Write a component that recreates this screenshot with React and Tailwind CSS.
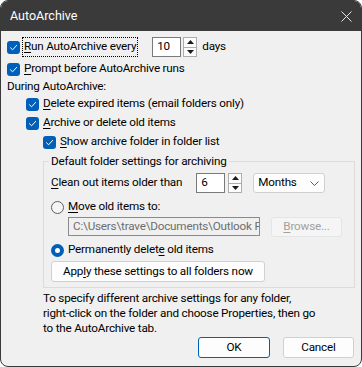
import React from "react";

function Check() {
  return (
    <span className="w-[13px] h-[13px] shrink-0 rounded-[3px] bg-[#005fb8] flex items-center justify-center">
      <svg width="9" height="9" viewBox="0 0 9 9" fill="none">
        <path d="M1.5 4.8 L3.6 6.8 L7.6 2.4" stroke="#fff" strokeWidth="1" strokeLinecap="round" strokeLinejoin="round" />
      </svg>
    </span>
  );
}

function Radio({ on }) {
  if (on) {
    return (
      <span className="w-[13px] h-[13px] shrink-0 rounded-full bg-[#005fb8] flex items-center justify-center">
        <span className="w-[5px] h-[5px] rounded-full bg-white" />
      </span>
    );
  }
  return <span className="w-[13px] h-[13px] shrink-0 rounded-full border border-[#5f5f5f] bg-[#f5f5f5]" />;
}

function U({ children }) {
  return <span className="underline underline-offset-[2px] decoration-[1px]">{children}</span>;
}

function Spin() {
  return (
    <div className="w-[14px] h-[20px] border border-[#adadad] bg-[#fdfdfd] flex flex-col">
      <div className="flex-1 flex items-center justify-center border-b border-[#adadad]">
        <svg width="7" height="4" viewBox="0 0 7 4"><path d="M0 4 L3.5 0 L7 4 Z" fill="#1a1a1a" /></svg>
      </div>
      <div className="flex-1 flex items-center justify-center">
        <svg width="7" height="4" viewBox="0 0 7 4"><path d="M0 0 L3.5 4 L7 0 Z" fill="#1a1a1a" /></svg>
      </div>
    </div>
  );
}

export default function App() {
  return (
    <div className="w-[362px] h-[367px] bg-white font-['Roboto',sans-serif] text-[11.7px] tracking-[-0.2px] text-black leading-none">
      <div className="h-full rounded-[8px] border border-[#3a3a3a] bg-[#f0f0f0] overflow-hidden flex flex-col">
        <div className="h-[30px] shrink-0 bg-[#3a3a3a] flex items-center justify-between pl-[9px] pr-[9px]">
          <span className="text-white text-[12.5px] tracking-normal">AutoArchive</span>
          <svg width="11" height="11" viewBox="0 0 11 11">
            <path d="M0.5 0.5 L10.5 10.5 M10.5 0.5 L0.5 10.5" stroke="#e6e6e6" strokeWidth="1" />
          </svg>
        </div>

        <div className="flex flex-col pl-[6px] pr-[6px]">
          <div className="mt-[6px] h-[20px] flex items-center">
            <Check />
            <span className="ml-[2px] h-[20px] px-[1px] flex items-center border border-dotted border-black">
              <U>R</U>un AutoArchive every
            </span>
            <div className="ml-[14px] w-[29px] h-[20px] border border-[#7a7a7a] bg-white flex items-center pl-[4px]">10</div>
            <div className="ml-[2px]"><Spin /></div>
            <span className="ml-[5px]">days</span>
          </div>

          <div className="h-[24px] flex items-center">
            <Check />
            <span className="ml-[4px]"><U>P</U>rompt before AutoArchive runs</span>
          </div>

          <div className="h-[12px] flex items-center">During AutoArchive:</div>

          <div className="h-[22px] flex items-center pl-[19px]">
            <Check />
            <span className="ml-[4px]"><U>D</U>elete expired items (email folders only)</span>
          </div>

          <div className="h-[16px] flex items-center pl-[19px]">
            <Check />
            <span className="ml-[4px]"><U>A</U>rchive or delete old items</span>
          </div>

          <div className="h-[22px] flex items-center pl-[36px]">
            <Check />
            <span className="ml-[4px]"><U>S</U>how archive folder in folder list</span>
          </div>

          <fieldset className="ml-[36px] border border-[#dcdcdc] pl-[7px] pr-[9px] pb-[5px]">
            <legend className="ml-[-2px] px-[2px] h-[16px] leading-[16px]">Default folder settings for archiving</legend>

            <div className="mt-[4px] h-[20px] flex items-center">
              <span><U>C</U>lean out items older than</span>
              <div className="ml-[14px] w-[29px] h-[20px] border border-[#7a7a7a] bg-white flex items-center pl-[4px]">6</div>
              <div className="ml-[3px]"><Spin /></div>
              <div className="ml-[11px] w-[72px] h-[20px] rounded-[3px] border border-[#d0d0d0] bg-[#fdfdfd] flex items-center justify-between pl-[4px] pr-[5px]">
                <span>Months</span>
                <svg width="9" height="5" viewBox="0 0 9 5"><path d="M0.5 0.5 L4.5 4.5 L8.5 0.5" stroke="#5a5a5a" fill="none" strokeWidth="1" /></svg>
              </div>
            </div>

            <div className="mt-[4px] h-[20px] flex items-center">
              <Radio />
              <span className="ml-[4px]"><U>M</U>ove old items to:</span>
            </div>

            <div className="h-[19px] flex items-center pl-[17px]">
              <div className="w-[192px] h-[19px] border border-[#8a8a8a] bg-[#f0f0f0] text-[#6d6d6d] flex items-center pl-[4px] overflow-hidden whitespace-nowrap">
                C:\Users\trave\Documents\Outlook F
              </div>
              <div className="ml-[11px] w-[71px] h-[20px] rounded-[3px] border border-[#e5e5e5] bg-[#f5f5f5] text-[#a0a0a0] flex items-center justify-center">
                <span><U>B</U>rowse...</span>
              </div>
            </div>

            <div className="mt-[4px] h-[20px] flex items-center">
              <Radio on />
              <span className="ml-[4px]">Permanently delet<U>e</U> old items</span>
            </div>

            <div className="mt-[1px] w-[214px] h-[21px] rounded-[3px] border border-[#d0d0d0] bg-[#fdfdfd] flex items-center justify-center">
              <span>App<U>l</U>y these settings to all folders now</span>
            </div>
          </fieldset>

          <p className="mt-[3px] ml-[36px] leading-[15px]">
            To specify different archive settings for any folder,<br />
            right-click on the folder and choose Properties, then go<br />
            to the AutoArchive tab.
          </p>

          <div className="mt-[1px] flex justify-end gap-[13px] pr-[1px]">
            <div className="w-[72px] h-[21px] rounded-[3px] border border-[#005fb8] bg-[#fdfdfd] flex items-center justify-center">OK</div>
            <div className="w-[71px] h-[21px] rounded-[3px] border border-[#d0d0d0] bg-[#fdfdfd] flex items-center justify-center">Cancel</div>
          </div>
        </div>
      </div>
    </div>
  );
}
